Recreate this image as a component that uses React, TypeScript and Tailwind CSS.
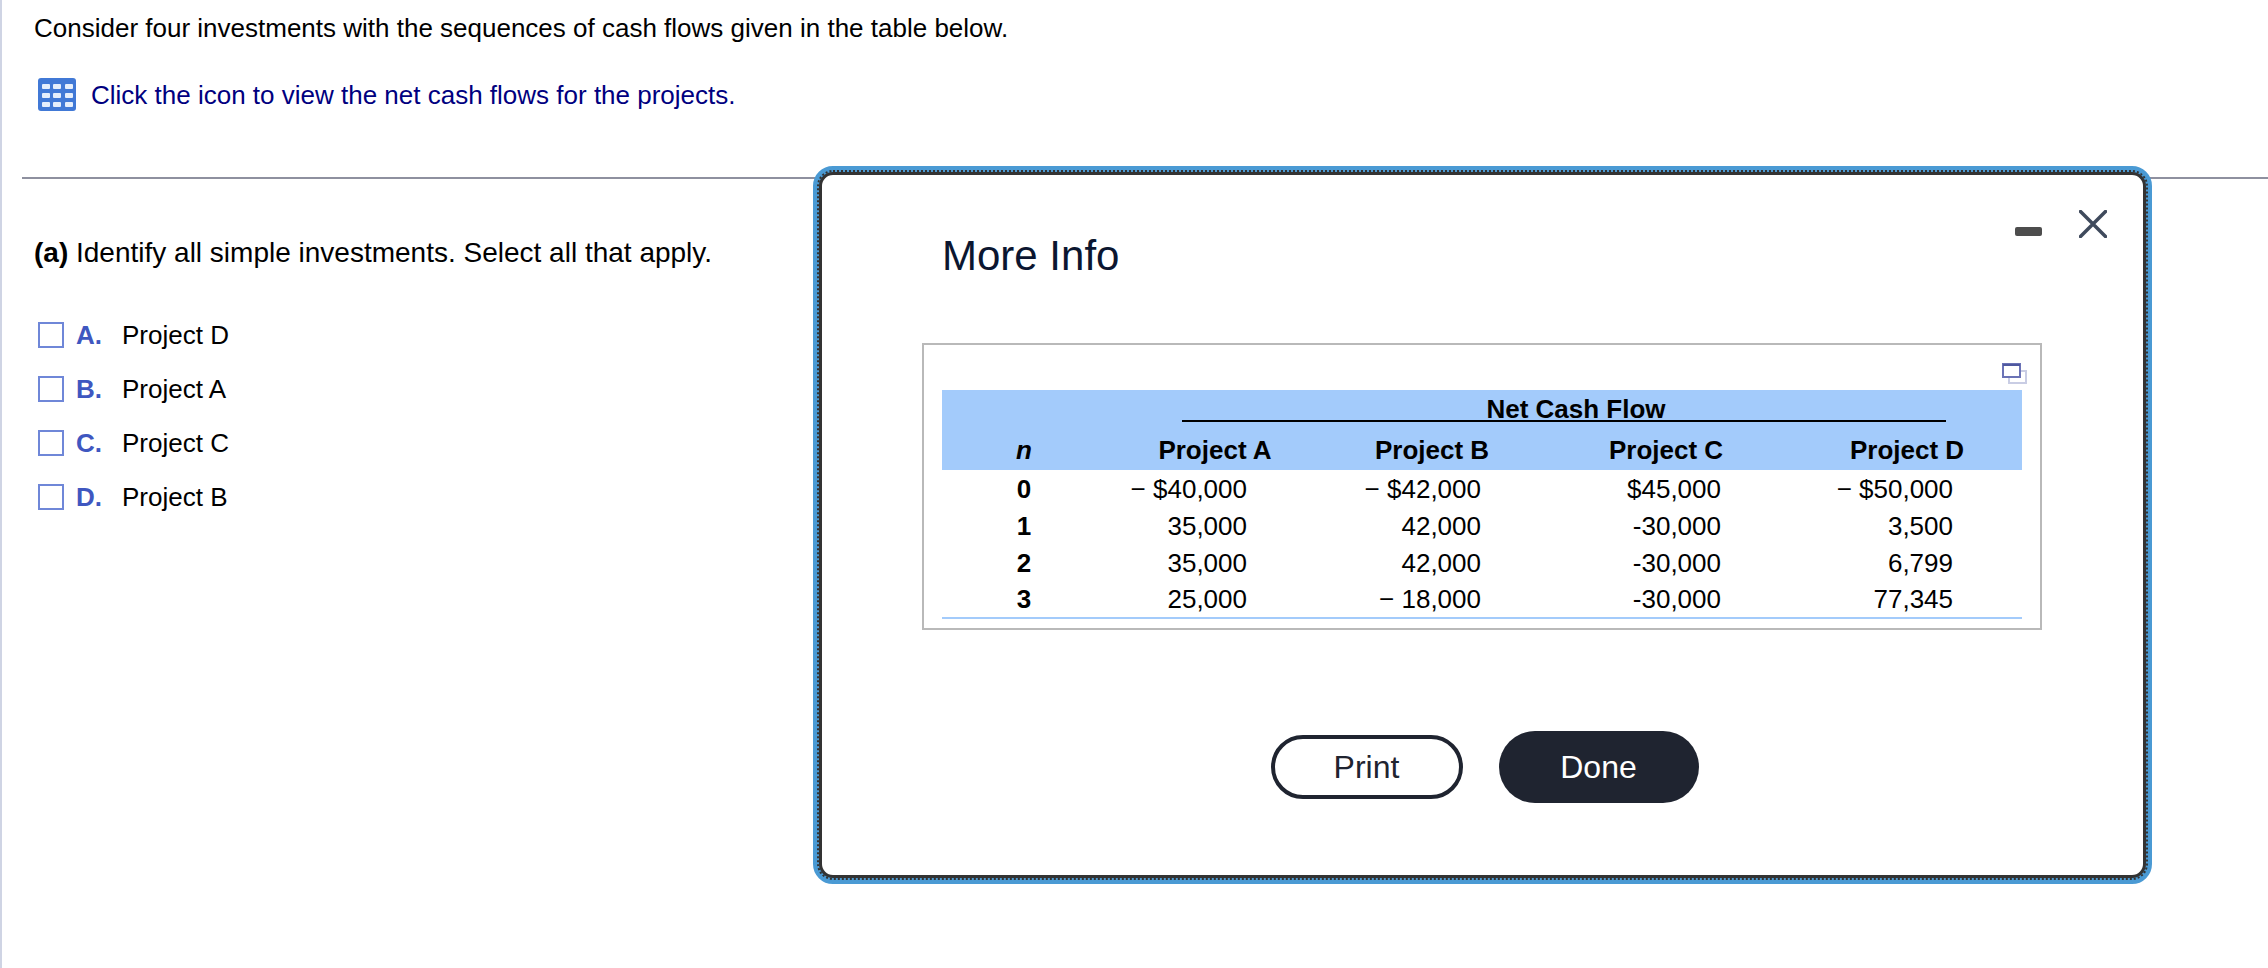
const options = [
  { key: "A.", label: "Project D" },
  { key: "B.", label: "Project A" },
  { key: "C.", label: "Project C" },
  { key: "D.", label: "Project B" },
];

const rows = [
  { n: "0", a: "− $40,000", b: "− $42,000", c: "$45,000", d: "− $50,000" },
  { n: "1", a: "35,000", b: "42,000", c: "-30,000", d: "3,500" },
  { n: "2", a: "35,000", b: "42,000", c: "-30,000", d: "6,799" },
  { n: "3", a: "25,000", b: "− 18,000", c: "-30,000", d: "77,345" },
];

function GridIcon() {
  return (
    <svg width="38" height="33" viewBox="0 0 38 33" className="shrink-0">
      <rect width="38" height="33" rx="3" fill="#4179d6" />
      {[6, 15, 24].map((y) =>
        [4, 15, 27].map((x) => (
          <rect key={`${x}-${y}`} x={x} y={y} width="8" height="5" rx="1" fill="#e6effc" />
        ))
      )}
    </svg>
  );
}

function ExpandIcon() {
  return (
    <svg width="25" height="21" viewBox="0 0 25 21" fill="none">
      <rect x="7" y="8" width="17" height="12" stroke="#c9cde4" strokeWidth="2" />
      <rect x="1" y="1" width="17" height="13" fill="#fff" stroke="#6b73b6" strokeWidth="2" />
      <rect x="1" y="1" width="17" height="2" fill="#4f589f" />
    </svg>
  );
}

function CloseIcon() {
  return (
    <svg width="28" height="28" viewBox="0 0 28 28" fill="none">
      <path d="M1.5 1.5 26.5 26.5M26.5 1.5 1.5 26.5" stroke="#3f4a5c" strokeWidth="3.5" strokeLinecap="round" />
    </svg>
  );
}

export default function App() {
  return (
    <div className="relative h-[968px] overflow-hidden bg-white font-['Liberation_Sans',Arial,sans-serif] text-[26px] text-black">
      <div className="h-full border-l-2 border-[#cfd4e4]">
        <div className="pl-[32px] pt-[13px]">
          <p className="leading-[30px]">Consider four investments with the sequences of cash flows given in the table below.</p>
          <div className="mt-[35px] flex items-center gap-[15px] pl-[4px]">
            <GridIcon />
            <span className="leading-[30px] text-[#00007f]">Click the icon to view the net cash flows for the projects.</span>
          </div>
        </div>
        <div className="ml-[20px] mt-[66px] h-[2px] bg-[#8e909f]" />
        <div className="pl-[32px] pt-[59px]">
          <p className="text-[28px] leading-[30px]"><b>(a)</b> Identify all simple investments. Select all that apply.</p>
          <div className="mt-[52px] flex flex-col gap-[24px] pl-[4px]">
            {options.map((o) => (
              <div key={o.key} className="flex h-[30px] items-center">
                <span className="h-[26px] w-[26px] border-2 border-[#6f87d8] bg-white" />
                <span className="ml-[12px] w-[46px] font-bold text-[#3f57c0]">{o.key}</span>
                <span className="leading-[30px]">{o.label}</span>
              </div>
            ))}
          </div>
        </div>
      </div>

      {/* more info dialog sits over the question */}
      <div className="absolute left-[813px] top-[166px] h-[718px] w-[1339px] rounded-[20px] border-[4px] border-[#4a9ad4] bg-[#4a9ad4]">
        <div className="h-full rounded-[16px] border-2 border-dotted border-[#333333]">
          <div className="h-full rounded-[14px] border-[3px] border-[#333333] bg-white pl-[120px] pr-[36px]">
            <div className="flex h-[165px] items-start justify-between">
              <h2 className="pt-[56px] text-[42px] leading-[50px] text-[#0b1630]">More Info</h2>
              <div className="flex items-center gap-[37px] pt-[35px]">
                <span className="mt-[15px] h-[9px] w-[27px] rounded-[2px] bg-[#4d4d4d]" />
                <CloseIcon />
              </div>
            </div>
            <div className="-ml-[20px] mt-[3px] h-[287px] w-[1120px] border-2 border-[#b9b9b9] px-[18px]">
              <div className="flex h-[45px] items-end justify-end pb-[6px]">
                <span className="-mr-[5px]"><ExpandIcon /></span>
              </div>
              <table className="w-[1080px] table-fixed border-b-2 border-[#a3cbfb] text-[26px]">
                <colgroup>
                  <col className="w-[164px]" />
                  <col className="w-[218px]" />
                  <col className="w-[216px]" />
                  <col className="w-[252px]" />
                  <col className="w-[230px]" />
                </colgroup>
                <thead className="bg-[#a3cbfb] font-bold">
                  <tr className="h-[40px]">
                    <th />
                    <th colSpan={4} className="p-0 align-bottom font-bold">
                      <div className="mx-[76px] mb-[8px] border-b-2 border-black pl-[24px] leading-[24px]"><span className="relative top-[1px]">Net Cash Flow</span></div>
                    </th>
                  </tr>
                  <tr className="h-[40px]">
                    <th className="p-0 italic">n</th>
                    <th className="p-0">Project A</th>
                    <th className="p-0">Project B</th>
                    <th className="p-0">Project C</th>
                    <th className="p-0">Project D</th>
                  </tr>
                </thead>
                <tbody>
                  {rows.map((r) => (
                    <tr key={r.n} className="h-[37px] leading-[30px]">
                      <td className="p-0 text-center font-bold">{r.n}</td>
                      <td className="p-0 pr-[77px] text-right">{r.a}</td>
                      <td className="p-0 pr-[59px] text-right">{r.b}</td>
                      <td className="p-0 pr-[71px] text-right">{r.c}</td>
                      <td className="p-0 pr-[69px] text-right">{r.d}</td>
                    </tr>
                  ))}
                </tbody>
              </table>
            </div>
            <div className="mt-[101px] flex items-center justify-center gap-[36px] pr-[80px] text-[32px]">
              <button className="h-[64px] w-[192px] rounded-full border-[4px] border-[#1f2430] bg-white text-[#1f2430]">Print</button>
              <button className="h-[72px] w-[200px] rounded-full bg-[#1f2430] text-white">Done</button>
            </div>
          </div>
        </div>
      </div>
    </div>
  );
}
